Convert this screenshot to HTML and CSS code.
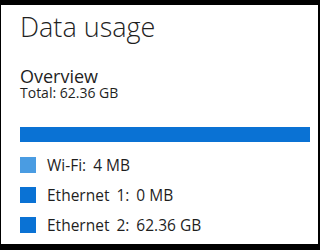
FILE: index.html
```html
<!DOCTYPE html>
<html>
<head>
<meta charset="utf-8">
<link rel="stylesheet" href="styles.css">
</head>
<body>
<div class="panel">
  <div class="title">Data usage</div>
  <div class="section">Overview</div>
  <div class="total">Total: 62.36 GB</div>
  <div class="bar"></div>
  <div class="legend">
    <div class="row"><span class="swatch wifi"></span><span class="label"><span>Wi-Fi:</span><span class="sp">4 MB</span></span></div>
    <div class="row"><span class="swatch eth"></span><span class="label"><span>Ethernet</span><span class="sp">1:</span><span class="sp">0 MB</span></span></div>
    <div class="row"><span class="swatch eth"></span><span class="label"><span>Ethernet</span><span class="sp">2:</span><span class="sp">62.36 GB</span></span></div>
  </div>
</div>
</body>
</html>
```
FILE: styles.css
```css
html, body {
  margin: 0;
  padding: 0;
  background: #000;
}
body {
  width: 320px;
  height: 250px;
  overflow: hidden;
}
.panel {
  margin: 5px 2px 0 1px;
  height: 239px;
  background: #fff;
  padding: 2px 8px 0 19px;
  box-sizing: border-box;
  font-family: "Open Sans", "Noto Sans", sans-serif;
  color: #1f1f1f;
}
.title {
  font-size: 27px;
  font-weight: 300;
  line-height: 40px;
  height: 40px;
}
.section {
  margin-top: 22px;
  font-size: 18px;
  line-height: 15px;
  height: 15px;
}
.total {
  margin-top: 2px;
  font-size: 14px;
  line-height: 14px;
  height: 14px;
}
.bar {
  margin-top: 27px;
  height: 15px;
  background: #0a72d4;
}
.legend {
  margin-top: 15px;
  display: flex;
  flex-direction: column;
  gap: 14px;
}
.row {
  display: flex;
  align-items: center;
  gap: 11px;
  height: 16px;
}
.swatch {
  width: 16px;
  height: 16px;
  flex: none;
}
.wifi { background: #4a9ce2; }
.eth { background: #0a72d4; }
.label {
  font-size: 15.5px;
  line-height: 16px;
  white-space: nowrap;
}
.sp {
  margin-left: 7px;
}
```
